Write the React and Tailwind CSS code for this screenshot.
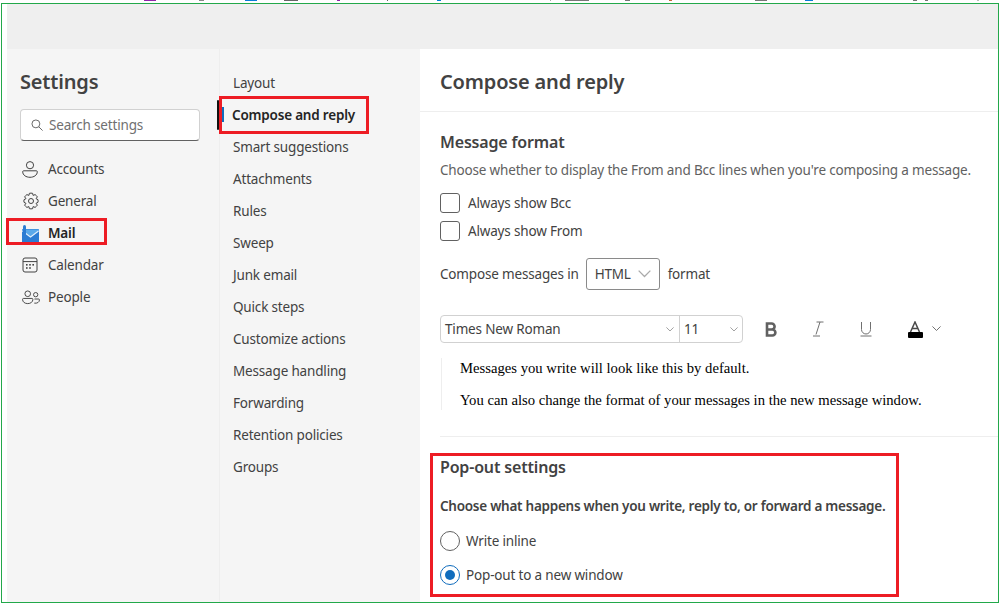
function Search() {
  return (
    <svg width="12" height="12" viewBox="0 0 14 14" fill="none" stroke="#616161" strokeWidth="1.1"><circle cx="5.7" cy="5.7" r="4.6" /><path d="M9 9 13.5 13.5" /></svg>
  );
}
function Chevron({ w = 10, color = "#8a8a8a" }) {
  return (
    <svg width={w} height={w * 0.6} viewBox="0 0 10 6" fill="none" stroke={color} strokeWidth="1"><path d="M0.5 0.5 5 5 9.5 0.5" /></svg>
  );
}
function AccountIcon() {
  return (
    <svg width="16" height="17" viewBox="0 0 16 17" fill="none" stroke="#424242" strokeWidth="1"><circle cx="8" cy="4.2" r="3.6" /><path d="M1.6 9.8h12.8a.9.9 0 0 1 .9.9c0 3.4-3.3 5.6-7.3 5.6S.7 14.1.7 10.7a.9.9 0 0 1 .9-.9Z" /></svg>
  );
}
function GearIcon() {
  return (
    <svg width="18" height="18" viewBox="0 0 18 18" fill="none" stroke="#424242" strokeWidth="1"><circle cx="9" cy="9" r="2.5" /><path d="M7.4 1.3a8 8 0 0 1 3.2 0l.5 2.1 2-.8a8 8 0 0 1 2.3 2.3l-1.4 1.7 2 1.1a8 8 0 0 1 0 2.6l-2 1.1 1.4 1.7a8 8 0 0 1-2.3 2.3l-2-.8-.5 2.1a8 8 0 0 1-3.2 0l-.5-2.1-2 .8a8 8 0 0 1-2.3-2.3l1.4-1.7-2-1.1a8 8 0 0 1 0-2.6l2-1.1-1.4-1.7a8 8 0 0 1 2.3-2.3l2 .8.5-2.1Z" /></svg>
  );
}
function MailIcon() {
  return (
    <svg className="mt-[6px]" width="17" height="15" viewBox="0 0 17 15"><rect x="0" y="0" width="17" height="15" rx="1" fill="#2b7cd3" /><path d="M0 0.5h17v1L8.5 7.5 0 1.5Z" fill="#5aa9ea" /><path d="M0.5 2 8.5 8l8-6" fill="none" stroke="#e2f0fb" strokeWidth="1.2" /></svg>
  );
}
function CalendarIcon() {
  return (
    <svg width="16" height="16" viewBox="0 0 16 16" fill="none" stroke="#424242" strokeWidth="1"><rect x="1" y="1" width="14" height="14" rx="2" /><path d="M1 4.6h14" /><g fill="#424242" stroke="none"><rect x="4" y="7" width="1.6" height="1.6" /><rect x="7.2" y="7" width="1.6" height="1.6" /><rect x="10.4" y="7" width="1.6" height="1.6" /><rect x="4" y="10.2" width="1.6" height="1.6" /><rect x="7.2" y="10.2" width="1.6" height="1.6" /></g></svg>
  );
}
function PeopleIcon() {
  return (
    <svg width="18" height="15" viewBox="0 0 19 16" fill="none" stroke="#424242" strokeWidth="1"><circle cx="6" cy="4" r="3" /><circle cx="14.5" cy="5" r="2.3" /><path d="M1.5 9h9a1 1 0 0 1 1 1c0 2.8-2.4 4.5-5.5 4.5S.5 12.8.5 10a1 1 0 0 1 1-1Z" /><path d="M13 14c3 .5 5.5-1 5.5-3.4a1 1 0 0 0-1-1h-4.3" /></svg>
  );
}
function NavItem({ icon, label, active }) {
  return (
    <div className="relative flex h-8 items-center">
      {active && <span className="absolute left-[3px] top-[8px] h-[16px] w-[3px] rounded-sm bg-[#2b7cd3]" />}
      <span className="flex w-[28px] items-center justify-start pl-[2px]">{icon}</span>
      <span className={active ? "font-semibold text-[#242424]" : "text-[#424242]"}>{label}</span>
    </div>
  );
}
function SubItem({ label, active }) {
  return (
    <div className={"relative flex h-8 items-center " + (active ? "pl-[12px] font-semibold tracking-[-0.2px] text-[#242424]" : "pl-[13px] text-[#424242]")}>
      {active && <span className="absolute left-[-3px] top-[1px] h-[30px] w-[2px] rounded-sm bg-[#111111]" />}
      {active && <span className="absolute left-[2px] top-[8px] h-[15px] w-[2px] bg-[#0f6cbd]" />}
      {label}
    </div>
  );
}
function Check({ label }) {
  return (
    <div className="flex h-7 items-center gap-2">
      <span className="h-5 w-5 rounded-[3px] border border-[#616161] bg-white" />
      <span className="text-[#424242]">{label}</span>
    </div>
  );
}
const subs = ["Layout", "Compose and reply", "Smart suggestions", "Attachments", "Rules", "Sweep", "Junk email", "Quick steps", "Customize actions", "Message handling", "Forwarding", "Retention policies", "Groups"];
const crumbs = [[144,12,"#8e24aa"],[199,5,"#888"],[245,12,"#0a7ed6"],[284,14,"#666"],[337,3,"#8e24aa"],[387,1,"#666"],[437,4,"#0a7ed6"],[550,1,"#aaa"],[565,24,"#777"],[625,5,"#777"],[669,3,"#c8693a"],[755,12,"#777"],[805,8,"#0a7ed6"],[913,4,"#777"],[925,3,"#777"],[977,2,"#bbb"]];
export default function App() {
  return (
    <div className="relative h-[605px] w-[1001px] overflow-hidden bg-white font-['Noto_Sans',sans-serif] text-[13.5px] tracking-[-0.17px]">
      <div className="h-[3px]">
        {crumbs.map(([x, w, c], i) => (
          <span key={i} className="absolute top-0 h-[1px]" style={{ left: x, width: w, backgroundColor: c }} />
        ))}
      </div>
      <div className="ml-[1px] flex h-[600px] w-[998px] flex-col border border-[#22a84a] pl-[5px]">
        <div className="h-[45px] shrink-0 bg-[#efefef]" />
        <div className="flex min-h-0 flex-1">
          <aside className="w-[212px] shrink-0 bg-[#f5f5f5] pl-[13px] pr-[19px] pt-[16px]">
            <h1 className="text-[20px] font-semibold leading-[34px] text-[#424242]">Settings</h1>
            <div className="mt-[10px] flex h-8 items-center gap-[6px] rounded border border-[#d1d1d1] border-b-[#616161] bg-white pl-[10px] text-[#707070]">
              <Search />
              <span>Search settings</span>
            </div>
            <nav className="mt-[12px]">
              <NavItem icon={<AccountIcon />} label="Accounts" />
              <NavItem icon={<GearIcon />} label="General" />
              <NavItem icon={<MailIcon />} label="Mail" active />
              <NavItem icon={<CalendarIcon />} label="Calendar" />
              <NavItem icon={<PeopleIcon />} label="People" />
            </nav>
          </aside>
          <nav className="w-[201px] shrink-0 border-l border-[#eeeeee] bg-[#f5f5f5] pt-[18px]">
            {subs.map((s) => <SubItem key={s} label={s} active={s === "Compose and reply"} />)}
          </nav>
          <main className="min-w-0 flex-1 bg-white">
            <div className="flex h-[63px] items-center border-b border-[#eeeeee] pl-[20px] pt-[3px]">
              <h2 className="text-[20px] font-semibold text-[#424242]">Compose and reply</h2>
            </div>
            <div className="pl-[20px]">
              <h3 className="mt-[18px] text-[16px] font-semibold leading-[24px] text-[#424242]">Message format</h3>
              <p className="mt-[6px] leading-[20px] text-[#616161]">Choose whether to display the From and Bcc lines when you're composing a message.</p>
              <div className="mt-[9px]">
                <Check label="Always show Bcc" />
                <Check label="Always show From" />
              </div>
              <div className="mt-[13px] flex items-center text-[#424242]">
                <span>Compose messages in</span>
                <span className="ml-[7px] flex h-8 w-[74px] items-center justify-between rounded-[3px] border border-[#8a8a8a] pl-2 pr-[8px]">HTML<Chevron w={13} color="#aaa" /></span>
                <span className="ml-2">format</span>
              </div>
              <div className="mt-[25px] flex items-center">
                <div className="flex h-[28px] w-[303px] items-center rounded border border-[#d1d1d1] text-[#424242]">
                  <div className="flex h-full w-[239px] items-center justify-between border-r border-[#d1d1d1] pl-[4px] pr-[5px]">Times New Roman<Chevron w={8} /></div>
                  <div className="flex flex-1 items-center justify-between pl-[4px] pr-[4px]">11<Chevron w={8} /></div>
                </div>
                <svg className="ml-[22px]" width="13" height="15" viewBox="0 0 13 15" fill="none"><path d="M2 1.5h4.6a3 3 0 0 1 0 6H2Zm0 6h5.4a3 3 0 0 1 0 6H2Z" stroke="#616161" strokeWidth="2.6" /></svg>
                <svg className="ml-[33px]" width="14" height="16" viewBox="0 0 14 16" fill="none" stroke="#707070" strokeWidth="1"><path d="M5.5 1h7M9 1 5 13.5M2 15h7" /></svg>
                <svg className="ml-[34px]" width="14" height="16" viewBox="0 0 14 16" fill="none" stroke="#707070" strokeWidth="1"><path d="M2.5 1v7.5a4.5 4.5 0 0 0 9 0V1M1.5 15h11" /></svg>
                <span className="ml-[34px] flex w-[16px] flex-col items-center">
                  <svg width="12" height="11" viewBox="0 0 12 11" fill="none" stroke="#4a4a4a" strokeWidth="1.5"><path d="M1.5 11 6 1l4.5 10M3 7.5h6" /></svg>
                  <span className="h-[6px] w-[15px] rounded-[1px] bg-black" />
                </span>
                <span className="ml-[9px]"><Chevron w={9} color="#616161" /></span>
              </div>
              <div className="ml-[1px] mt-[15px] h-[52px] border-l border-[#eeeeee] pl-[18px] font-['Liberation_Serif',serif] text-[14.67px] tracking-normal text-black">
                <p className="leading-[20px]">Messages you write will look like this by default.</p>
                <p className="mt-[12px] leading-[20px]">You can also change the format of your messages in the new message window.</p>
              </div>
              <div className="mt-[26px] border-t border-[#eeeeee]" />
              <h3 className="mt-[18px] text-[16px] font-semibold leading-[24px] text-[#424242]">Pop-out settings</h3>
              <p className="mt-[17px] font-semibold leading-[20px] tracking-[-0.26px] text-[#424242]">Choose what happens when you write, reply to, or forward a message.</p>
              <div className="mt-[14px] flex h-[22px] items-center gap-[6px] text-[#424242]">
                <span className="h-5 w-5 rounded-full border border-[#616161]" />
                Write inline
              </div>
              <div className="mt-[12px] flex h-[22px] items-center gap-[6px] text-[#424242]">
                <span className="flex h-5 w-5 items-center justify-center rounded-full border border-[#0f6cbd]"><span className="h-[10px] w-[10px] rounded-full bg-[#0f6cbd]" /></span>
                Pop-out to a new window
              </div>
            </div>
          </main>
        </div>
      </div>
      <div className="absolute left-[6px] top-[218px] h-[27px] w-[101px] border-[3px] border-[#ed1c24]" />
      <div className="absolute left-[219px] top-[96px] h-[38px] w-[150px] border-[3px] border-[#ed1c24]" />
      <div className="absolute left-[430px] top-[453px] h-[144px] w-[469px] border-[3px] border-[#ed1c24]" />
    </div>
  );
}
